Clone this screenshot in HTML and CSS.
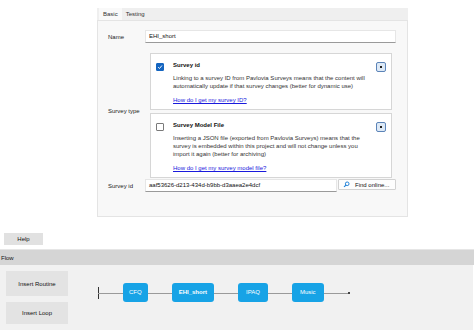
FILE: index.html
```html
<!DOCTYPE html>
<html lang="en">

<head>
    <meta charset="utf-8">
    <meta name="viewport" content="width=device-width, initial-scale=1.0">
    <title>Survey routine</title>

    <link rel="stylesheet" href="styles.css">

</head>

<body>
    <div class="dialog">
        <nav class="tabs">
            <span class="tab valgt">Basic</span>
            <span class="tab">Testing</span>
        </nav>

        <section class="panel">
            <span class="lbl">Name</span>
            <div class="field">EHI_short</div>

            <span class="lbl">Survey type</span>
            <div class="choices">
                <article class="choice">
                    <span class="check on">
                        <svg viewBox="0 0 8 8" width="6" height="6"><path d="M1.5 4.2 L3.3 6 L6.6 2" fill="none" stroke="#fff" stroke-width="1.3"/></svg>
                    </span>
                    <div class="choice_body">
                        <h2>Survey id</h2>
                        <p>Linking to a survey ID from Pavlovia Surveys means that the content will automatically update if that survey changes (better for dynamic use)</p>
                        <a href="#">How do I get my survey ID?</a>
                    </div>
                    <span class="drop"></span>
                </article>
                <article class="choice">
                    <span class="check"></span>
                    <div class="choice_body">
                        <h2>Survey Model File</h2>
                        <p>Inserting a JSON file (exported from Pavlovia Surveys) means that the survey is embedded within this project and will not change unless you import it again (better for archiving)</p>
                        <a href="#">How do I get my survey model file?</a>
                    </div>
                    <span class="drop"></span>
                </article>
            </div>

            <span class="lbl">Survey id</span>
            <div class="id_row">
                <div class="field">aaf53626-d213-434d-b9bb-d3aaea2e4dcf</div>
                <button class="find">
                    <svg viewBox="0 0 10 10" width="7" height="7"><circle cx="6" cy="4" r="2.6" fill="none" stroke="#1e7fd6" stroke-width="1.4"/><path d="M4.2 5.8 L1.5 8.5" stroke="#1e7fd6" stroke-width="1.6"/></svg>
                    Find online...
                </button>
            </div>
        </section>
    </div>

    <div class="help_row">
        <button class="help">Help</button>
    </div>

    <div class="flow_bar">Flow</div>

    <div class="flow_area">
        <div class="side">
            <button class="side_btn">Insert Routine</button>
            <button class="side_btn loop">Insert Loop</button>
        </div>
        <div class="canvas">
            <div class="timeline">
                <span class="tick"></span>
                <span class="node">CFQ</span>
                <span class="node bold">EHI_short</span>
                <span class="node wide">IPAQ</span>
                <span class="node wide">Music</span>
                <span class="end"></span>
            </div>
        </div>
    </div>
</body></html>
```

FILE: styles.css
```css
body {
    margin: 0;
    background-color: #ffffff;
    font-family: "Liberation Sans", Arial, sans-serif;
    font-size: 6px;
    color: #111;
}

button {
    font-family: inherit;
    font-size: 6px;
    color: #111;
    border-style: none;
    padding: 0;
}

/* dialog */

.dialog {
    margin-left: 97px;
    width: 311px;
    padding-top: 8px;
}

.tabs {
    display: flex;
    height: 12px;
    background-color: #efefef;
}

.tab {
    display: flex;
    align-items: center;
    padding: 0 4px;
    color: #333;
}

.valgt {
    background-color: #f9f9f9;
    margin-left: 2px;
}

.panel {
    display: grid;
    grid-template-columns: 37px 1fr;
    align-items: center;
    align-content: start;
    height: 197px;
    box-sizing: border-box;
    padding: 9px 11px 0 10px;
    background-color: #f8f8f8;
    border: 1px solid #e4e4e4;
}

.lbl {
    color: #222;
}

.field {
    height: 11px;
    line-height: 11px;
    padding-left: 3px;
    background-color: #ffffff;
    border: 1px solid #e6e6e6;
    border-bottom-color: #9a9a9a;
}

.choices {
    display: flex;
    flex-direction: column;
    gap: 3px;
    margin: 10px 4px 1px 5px;
}

.choice {
    display: flex;
    align-items: flex-start;
    background-color: #ffffff;
    border: 1px solid #d6d6d6;
    padding: 7px 5px 5px 5px;
}

.check {
    width: 6px;
    height: 6px;
    margin-top: 2px;
    border: 1px solid #7a7a7a;
    border-radius: 1px;
    display: flex;
    align-items: center;
    justify-content: center;
    flex-shrink: 0;
}

.check.on {
    background-color: #1565c0;
    border-color: #1565c0;
}

.choice_body {
    flex: 1;
    margin-left: 9px;
    margin-right: 8px;
}

h2 {
    margin: 0 0 5px 0;
    font-size: 6px;
    line-height: 8px;
}

p {
    margin: 0 0 6px 0;
    line-height: 8px;
    color: #333;
}

a {
    color: #1a1adc;
    line-height: 8px;
}

.drop {
    width: 8px;
    height: 8px;
    margin-top: 1px;
    border: 1px solid #5c84b8;
    border-radius: 2px;
    background-color: #dde9f6;
    position: relative;
    flex-shrink: 0;
}

.drop::after {
    content: "";
    position: absolute;
    left: 3px;
    top: 3px;
    width: 2px;
    height: 2px;
    background-color: #222;
}

.id_row {
    display: flex;
    gap: 1px;
}

.id_row .field {
    flex: 1;
}

.find {
    display: flex;
    align-items: center;
    gap: 5px;
    width: 58px;
    height: 11px;
    padding-left: 4px;
    background-color: #fdfdfd;
    border: 1px solid #d2d2d2;
    border-radius: 1px;
}

/* help */

.help_row {
    padding: 16px 0 4px 4px;
}

.help {
    width: 39px;
    height: 12px;
    background-color: #e1e1e1;
}

/* flow */

.flow_bar {
    height: 16px;
    line-height: 16px;
    padding-left: 1px;
    background-color: #d5d5d5;
    border-top: 1px solid #e6e6e6;
    box-sizing: border-box;
}

.flow_area {
    display: flex;
    height: 65px;
    width: 473px;
    background-color: #f1f1f1;
}

.side {
    display: flex;
    flex-direction: column;
    gap: 6px;
    padding: 6px 0 0 6px;
    width: 68px;
}

.side_btn {
    width: 62px;
    height: 25px;
    background-color: #e3e3e3;
}

.side_btn.loop {
    height: 22px;
}

.canvas {
    flex: 1;
    padding: 18px 0 0 24px;
}

.timeline {
    display: flex;
    align-items: center;
    gap: 24px;
    position: relative;
    width: max-content;
}

.timeline::before {
    content: "";
    position: absolute;
    left: 0;
    right: 0;
    top: 50%;
    height: 1px;
    background-color: #9a9a9a;
}

.tick {
    width: 1px;
    height: 12px;
    background-color: #333;
}

.node {
    position: relative;
    height: 19px;
    line-height: 19px;
    padding: 0 6px;
    border-radius: 3px;
    background-color: #17a3e6;
    color: #ffffff;
}

.node.bold {
    font-weight: bold;
    padding: 0 7px;
}

.node.wide {
    padding: 0 8px;
}

.end {
    position: relative;
    width: 2px;
    height: 2px;
    background-color: #444;
}
```
